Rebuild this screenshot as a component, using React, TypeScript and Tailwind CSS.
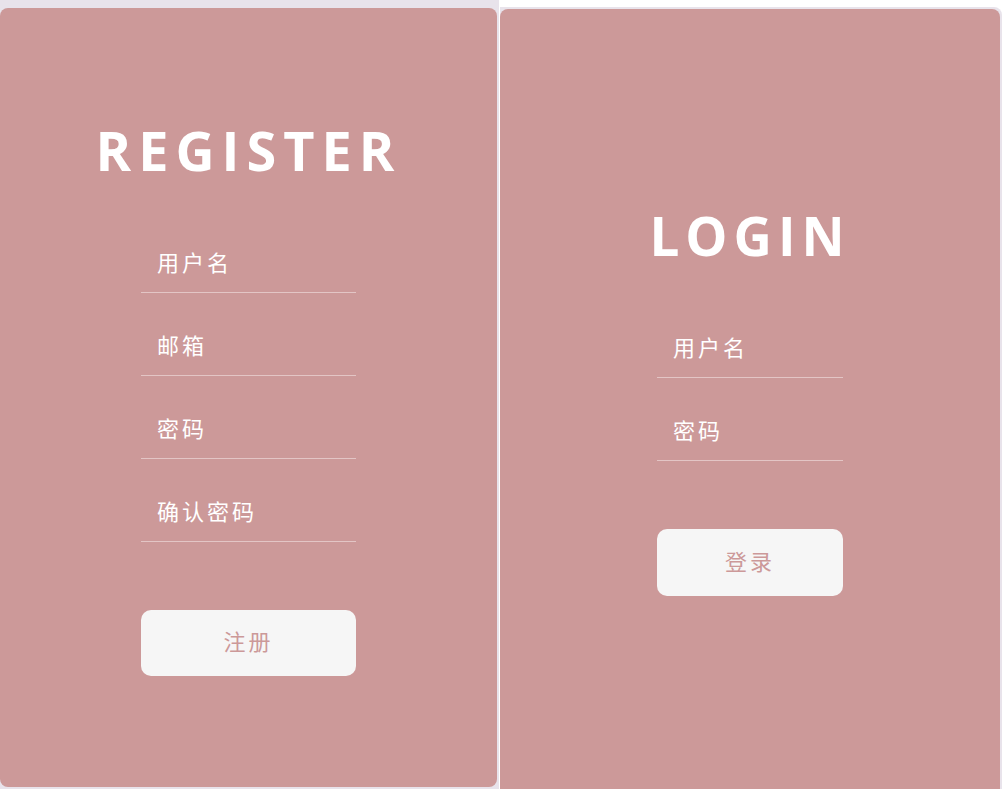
import React from "react";

const font = { fontFamily: '"Open Sans", "Noto Sans CJK SC", sans-serif' };

function Field({ label, w }: { label: string; w: string }) {
  return (
    <input
      type="text"
      placeholder={label}
      className={`${w} h-[58px] shrink-0 bg-transparent border-0 border-b border-[#e3c5c5] pl-4 pb-1 text-[22px] tracking-[3px] text-white placeholder:text-white outline-none`}
      style={font}
    />
  );
}

export default function App() {
  return (
    <div className="flex w-[1002px] h-[789px] overflow-hidden bg-[#e8e3eb]" style={font}>
      <div className="w-[497px] shrink-0 pt-2">
        <div className="h-[779px] rounded-lg bg-[#cc9999] flex flex-col items-center pt-[112px]">
          <h1 className="h-[60px] leading-[60px] text-[54px] font-bold tracking-[7px] text-white">REGISTER</h1>
          <div className="mt-[55px] flex flex-col gap-[25px]">
            <Field label="用户名" w="w-[215px]" />
            <Field label="邮箱" w="w-[215px]" />
            <Field label="密码" w="w-[215px]" />
            <Field label="确认密码" w="w-[215px]" />
          </div>
          <button className="mt-[68px] w-[215px] h-[66px] pb-1 rounded-[10px] bg-[#f6f6f6] text-[22px] tracking-[3px] text-[#cc9999]">
            注册
          </button>
        </div>
      </div>
      <div className="w-[2px] shrink-0" />
      <div className="w-[503px] shrink-0 bg-white pt-[7px] flex flex-col">
        <div className="flex-1 ml-px bg-[#e8e3eb] rounded-tr-lg pt-[2px] pr-[2px] flex flex-col">
          <div className="flex-1 rounded-t-lg bg-[#cc9999] flex flex-col items-center pt-[197px]">
            <h1 className="h-[60px] leading-[60px] text-[53px] font-bold tracking-[6px] text-white">LOGIN</h1>
            <div className="mt-[54px] flex flex-col gap-[25px]">
              <Field label="用户名" w="w-[186px]" />
              <Field label="密码" w="w-[186px]" />
            </div>
            <button className="mt-[68px] w-[186px] h-[67px] pb-[2px] rounded-[10px] bg-[#f6f6f6] text-[22px] tracking-[3px] text-[#cc9999]">
              登录
            </button>
          </div>
        </div>
      </div>
    </div>
  );
}
